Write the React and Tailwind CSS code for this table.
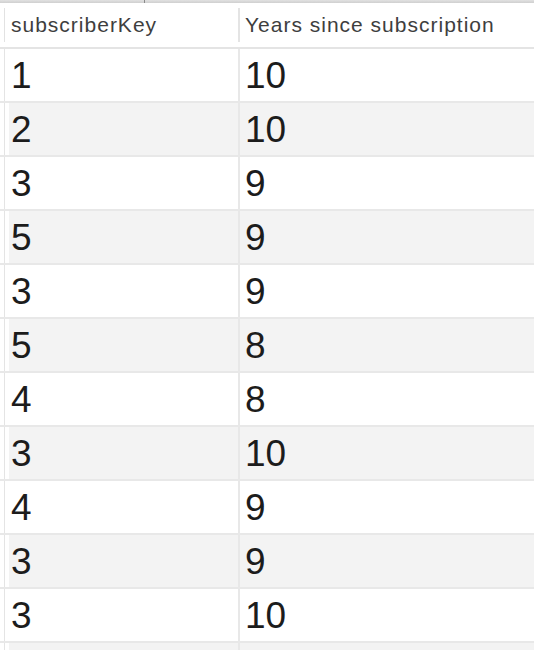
const rows = [
  ["1", "10"],
  ["2", "10"],
  ["3", "9"],
  ["5", "9"],
  ["3", "9"],
  ["5", "8"],
  ["4", "8"],
  ["3", "10"],
  ["4", "9"],
  ["3", "9"],
  ["3", "10"],
  ["", ""],
];

export default function App() {
  return (
    <div
      className="w-[534px] h-[650px] overflow-hidden bg-white"
      style={{ fontFamily: '"Liberation Sans", Arial, sans-serif' }}
    >
      {/* top strip */}
      <div className="relative h-[3px] bg-gradient-to-b from-[#e2e2e2] to-[#cfcfcf]">
        <div className="absolute left-[144px] top-0 w-px h-[3px] bg-[#8a8a8a]" />
      </div>

      {/* header */}
      <div className="flex h-[46px] border-b-2 border-[#e4e4e4] text-[21px] tracking-[1px] text-[#3e3e3e]">
        <div className="flex items-center w-[238px] pl-[4px]">
          <div className="h-[34px] border-l border-[#e2e2e2]" />
          <span className="pl-[6px]">subscriberKey</span>
        </div>
        <div className="flex items-center flex-1">
          <div className="h-[34px] w-[2px] bg-[#e4e4e4]" />
          <span className="pl-[5px]">Years since subscription</span>
        </div>
      </div>

      {/* rows */}
      {rows.map((r, i) => {
        const odd = i % 2 === 1;
        const bg = odd ? "bg-[#f3f3f3]" : "bg-white";
        return (
          <div
            key={i}
            className="flex h-[54px] border-b-2 border-[#e8e8e8] text-[37px] text-[#1c1c1c]"
          >
            <div className="w-[4px] bg-white" />
            <div className="w-px bg-[#e4e4e4]" />
            <div className="w-[4px] bg-white" />
            <div className={`flex items-center w-[229px] pl-[2px] pt-[2px] ${bg}`}>{r[0]}</div>
            <div className="w-[2px] bg-[#e8e8e8]" />
            <div className={`flex items-center flex-1 pl-[5px] pt-[2px] ${bg}`}>{r[1]}</div>
          </div>
        );
      })}
    </div>
  );
}
